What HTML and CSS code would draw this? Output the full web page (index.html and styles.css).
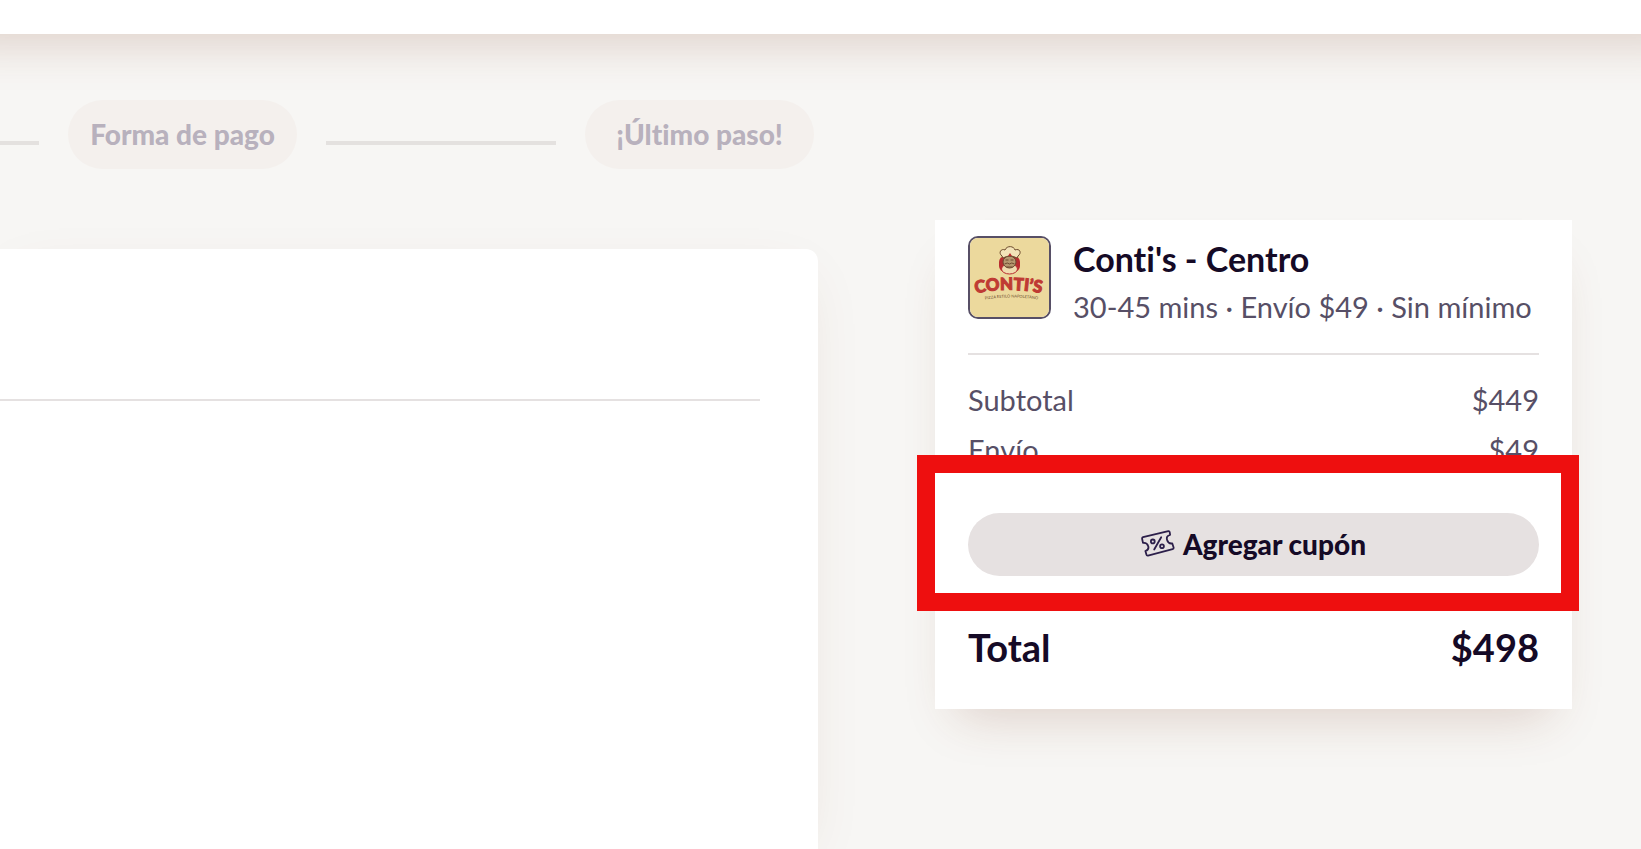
FILE: index.html
```html
<!DOCTYPE html>
<html lang="es">
<head>
  <meta charset="UTF-8">
  <meta name="viewport" content="width=device-width, initial-scale=1">
  <title>Conti's - Centro</title>
  <link rel="stylesheet" href="styles.css">
</head>
<body>

  <header class="header"></header>

  <main class="checkout">
    <div class="principal">
      <nav class="pasos">
        <span class="linea linea-inicial"></span>
        <button type="button" class="paso">Forma de pago</button>
        <span class="linea"></span>
        <button type="button" class="paso">¡Último paso!</button>
      </nav>
      <section class="panel">
        <hr class="divisor">
      </section>
    </div>

    <aside class="resumen">
      <div class="tienda">
        <svg class="logo" viewBox="0 0 79 79" role="img">
          <rect width="79" height="79" fill="#ecd99d"/>
          <!-- chef -->
          <rect x="29" y="18" width="21" height="16" rx="6" fill="#b82d30"/>
          <ellipse cx="39.5" cy="31" rx="8" ry="5" fill="#f0dcb0" stroke="#b82d30"/>
          <ellipse cx="39.5" cy="24" rx="6.5" ry="6" fill="#b5986f" stroke="#6b4a31"/>
          <path d="M34.500 26q3-2 5 0q2-2 5 0M36.500 29h6M35.500 22h3M40.500 22h3" fill="none" stroke="#6f4a31"/>
          <path d="M32 18C28 15 31 10 35 12C37 7 44 8 45 12C50 10 52 15 48 18L47 20Q40 16 33 20Z" fill="#f3e3b8" stroke="#6b4a2c"/>
          <path d="M38 18h4l-2-3z" fill="#b82d30"/>
          <path id="arco" d="M2 56Q39 48 75 56" fill="none"/>
          <path id="arco-lema" d="M12 62Q41 57 71 62" fill="none"/>
          <text class="logo-nombre"><textPath href="#arco" startOffset="50%">CONTI’S</textPath></text>
          <text class="logo-lema"><textPath href="#arco-lema" startOffset="50%">PIZZA ESTILO NAPOLETANO</textPath></text>
        </svg>
        <div class="datos">
          <h2 class="nombre">Conti's - Centro</h2>
          <p class="detalle">30-45 mins · Envío $49 · Sin mínimo</p>
        </div>
      </div>

      <dl class="costos">
        <div class="fila">
          <dt>Subtotal</dt>
          <dd>$449</dd>
        </div>
        <div class="fila">
          <dt>Envío</dt>
          <dd>$49</dd>
        </div>
      </dl>

      <div class="cupon">
        <button type="button" class="btn-cupon">
          <svg class="ticket" viewBox="0 0 34 27" aria-hidden="true">
            <path d="M2 7.2L27.3 1.2Q28.5 1 28.7 2.2L29.1 4.8C26.2 5.6 25.3 7.4 26.1 10C26.8 12.6 28.7 13.8 31.3 13.4L32.6 17.6Q32.8 18.9 31.6 19.2L7 25.6Q5.7 25.8 5.4 24.6L4.4 21C7 20 7.9 18 7.1 15.9C6.3 13.5 4.6 12.5 2 12.9L1.1 8.7Q1 7.5 2 7.2Z"/>
            <path d="M20.2 7.3L13.2 19.5"/>
            <circle cx="11.8" cy="11.4" r="1.9"/>
            <circle cx="21" cy="16.2" r="1.9"/>
          </svg>
          Agregar cupón
        </button>
        <div class="marco"></div>
      </div>

      <div class="total">
        <span>Total</span>
        <span>$498</span>
      </div>
    </aside>
  </main>

</body>
</html>
```

FILE: styles.css
```css
* {
  box-sizing: border-box;
}

body {
  margin: 0;
  min-height: 100vh;
  display: flex;
  flex-direction: column;
  background-color: #f7f6f4;
  color: #150a26;
  font-family: Lato, "Open Sans", sans-serif;
  font-variant-ligatures: none;
  overflow: hidden;
}

button {
  font-family: inherit;
  font-variant-ligatures: none;
}

.header {
  height: 34px;
  flex-shrink: 0;
  background-color: #fff;
  box-shadow: 0 -40px 48px 48px rgba(125, 55, 30, 0.21);
}

.checkout {
  flex: 1;
  display: grid;
  grid-template-columns: minmax(0, 1fr) 637px;
  gap: 117px;
  align-items: stretch;
  padding-right: 69px;
}

.principal {
  display: flex;
  flex-direction: column;
  padding-top: 66px;
}

/* pasos */
.pasos {
  display: flex;
  align-items: center;
  gap: 29px;
  padding-right: 4px;
  margin-bottom: 80px;
}

.paso {
  flex: 0 0 229px;
  height: 69px;
  padding: 0 0 2px;
  border: 0;
  border-radius: 35px;
  background-color: #f4f0ed;
  color: #b8b1bd;
  font-size: 28px;
  font-weight: 900;
}

.linea {
  flex: 1;
  height: 4px;
  margin-top: 16px;
  background-color: #e4e1df;
}

.linea-inicial {
  flex: 0 0 39px;
}

.panel {
  flex: 1;
  padding: 150px 58px 0 0;
  background-color: #fff;
  border-radius: 0 12px 0 0;
  box-shadow: 0 16px 56px -18px rgba(125, 65, 30, 0.13);
}

.divisor {
  height: 2px;
  margin: 0;
  border: 0;
  background-color: #e5e1e1;
}

/* resumen del pedido */
.resumen {
  align-self: start;
  margin-top: 186px;
  padding: 16px 33px 38px;
  background-color: #fff;
  box-shadow: 0 28px 48px -22px rgba(125, 55, 30, 0.21);
}

.tienda {
  display: flex;
  gap: 22px;
  height: 119px;
  border-bottom: 2px solid #e5e1e1;
}

.logo {
  flex-shrink: 0;
  width: 83px;
  height: 83px;
  border: 2px solid #574f66;
  border-radius: 10px;
}

.logo-nombre {
  font-family: Lato, sans-serif;
  font-size: 17px;
  font-weight: 900;
  fill: #bf3a33;
  stroke: #bf3a33;
  stroke-width: 1px;
  text-anchor: middle;
}

.logo-lema {
  font-family: Lato, sans-serif;
  font-size: 4px;
  fill: #6b4a2c;
  text-anchor: middle;
}

.nombre {
  margin: 0;
  font-size: 34px;
  font-weight: 700;
  line-height: 46px;
}

.detalle {
  margin: 0;
  color: #574f66;
  font-size: 29px;
  line-height: 50px;
  white-space: nowrap;
}

.costos {
  margin: 0;
  padding-top: 20px;
  color: #574f66;
  font-size: 29px;
  line-height: 50px;
}

.fila,
.total {
  display: flex;
  justify-content: space-between;
}

.fila dd {
  margin: 0;
}

.cupon {
  position: relative;
  margin-top: 38px;
}

.btn-cupon {
  display: flex;
  align-items: center;
  justify-content: center;
  gap: 8px;
  width: 100%;
  height: 63px;
  padding: 0 0 2px;
  border: 0;
  border-radius: 32px;
  background-color: #e6e1e1;
  color: #150a26;
  font-size: 28px;
  font-weight: 900;
}

.ticket {
  width: 34px;
  height: 27px;
  fill: none;
  stroke: #2c1f4a;
  stroke-width: 1.8;
  stroke-linecap: round;
  stroke-linejoin: round;
}

/* recuadro rojo sobre el cupón */
.marco {
  position: absolute;
  inset: -58px -40px -35px -51px;
  border: 18px solid #ee0f0f;
  pointer-events: none;
}

.total {
  margin-top: 47px;
  font-size: 38px;
  font-weight: 700;
  line-height: 48px;
}
```
